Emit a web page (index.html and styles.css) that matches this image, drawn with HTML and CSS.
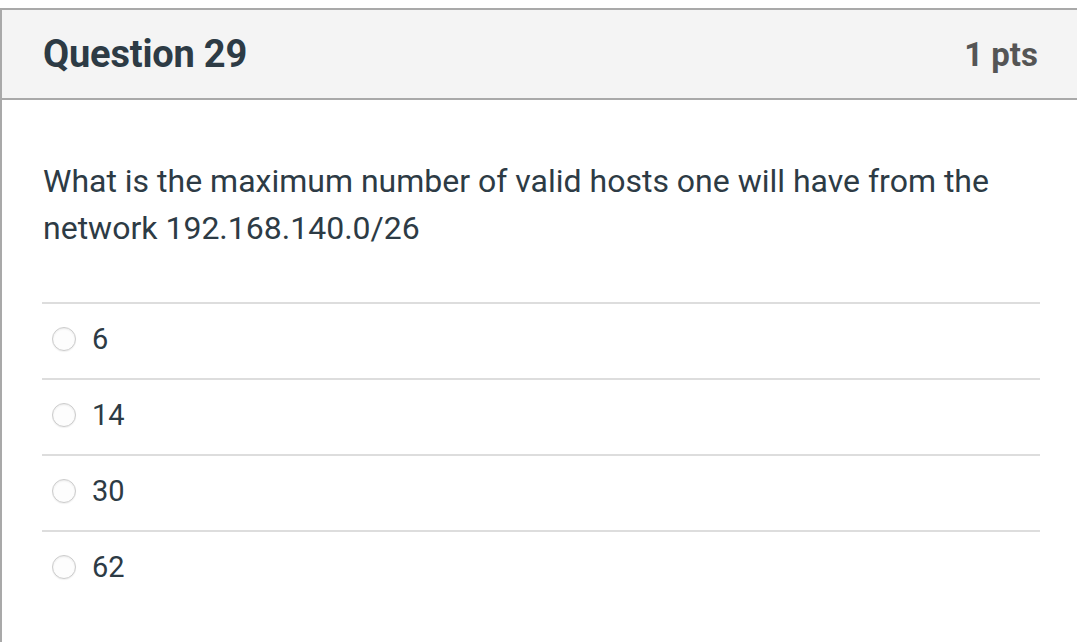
FILE: index.html
```html
<!DOCTYPE html>
<html>
<head>
<meta charset="utf-8">
<link rel="stylesheet" href="styles.css">
</head>
<body>
<div class="card">
  <div class="card-header">
    <h2 class="title">Question 29</h2>
    <span class="points">1 pts</span>
  </div>
  <div class="card-body">
    <p class="question">What is the maximum number of valid hosts one will have from the network 192.168.140.0/26</p>
    <div class="answers">
      <label class="answer"><span class="radio"></span><span class="answer-text">6</span></label>
      <label class="answer"><span class="radio"></span><span class="answer-text">14</span></label>
      <label class="answer"><span class="radio"></span><span class="answer-text">30</span></label>
      <label class="answer"><span class="radio"></span><span class="answer-text">62</span></label>
    </div>
  </div>
</div>
</body>
</html>
```
FILE: styles.css
```css
html, body {
  margin: 0;
  padding: 0;
  background: #ffffff;
}
body {
  padding-top: 8px;
  font-family: Roboto, "Liberation Sans", Arial, sans-serif;
  color: #2d3b45;
  overflow: hidden;
  height: 642px;
  box-sizing: border-box;
}
.card {
  border-top: 2px solid #a9a9a9;
  border-left: 2px solid #a9a9a9;
  height: 100%;
  box-sizing: border-box;
}
.card-header {
  display: flex;
  align-items: center;
  justify-content: space-between;
  background: #f4f4f4;
  border-bottom: 2px solid #a9a9a9;
  padding: 0 39px 0 41px;
  box-sizing: border-box;
  height: 90px;
}
.title {
  margin: 0;
  font-size: 38px;
  font-weight: 700;
  color: #2d3b45;
  letter-spacing: -0.2px;
}
.points {
  font-size: 33px;
  font-weight: 700;
  color: #555555;
}
.card-body {
  padding: 58px 35px 0 40px;
}
.question {
  margin: 0 0 50px 1px;
  font-size: 32px;
  line-height: 47px;
  color: #2d3b45;
  width: 1000px;
}
.answers {
  width: 998px;
}
.answer {
  display: flex;
  align-items: center;
  height: 76px;
  box-sizing: border-box;
  border-top: 2px solid #dddddd;
  padding-left: 10px;
  padding-bottom: 4px;
}
.radio {
  width: 22px;
  height: 22px;
  border-radius: 50%;
  border: 1px solid #cccccc;
  background: #fdfdfd;
  box-shadow: inset 0 1px 2px rgba(0,0,0,0.08), 0 1px 1px rgba(0,0,0,0.06);
  flex: none;
}
.answer-text {
  margin-left: 16px;
  font-size: 29px;
  color: #2d3b45;
}
```
